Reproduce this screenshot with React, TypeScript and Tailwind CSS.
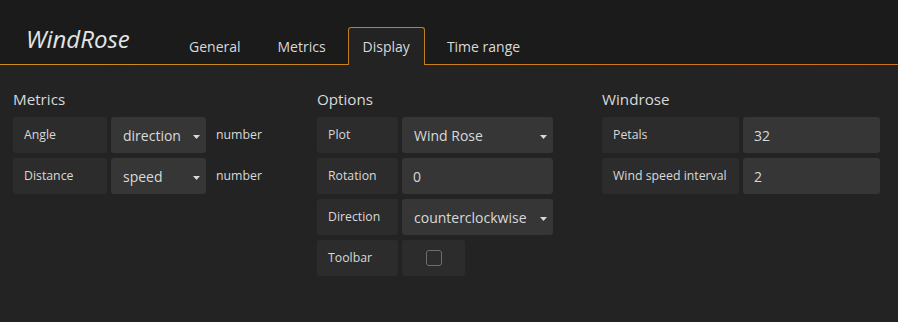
import React from "react";

const font = { fontFamily: '"Open Sans", "DejaVu Sans", sans-serif' };

function Caret() {
  return (
    <svg width="7" height="4" viewBox="0 0 7 4" className="mt-[3px]">
      <polygon points="0,0 7,0 3.5,4" fill="#d8d9da" />
    </svg>
  );
}

function Label({ w, children }: { w: string; children: React.ReactNode }) {
  return (
    <div className={`${w} h-full bg-[#2c2c2c] rounded-[3px] flex items-center pl-[11px] text-[12.3px] text-[#d8d9da] mr-[4px] whitespace-nowrap`}>
      {children}
    </div>
  );
}

function Select({ w, value }: { w: string; value: string }) {
  return (
    <div className={`${w} h-full bg-[#363636] rounded-[3px] flex items-center justify-between pl-[12px] pr-[6px] text-[14px] text-[#d8d9da]`}>
      <span>{value}</span>
      <Caret />
    </div>
  );
}

function Input({ w, value }: { w: string; value: string }) {
  return (
    <div className={`${w} h-full bg-[#363636] rounded-[3px] flex items-center pl-[11px] text-[14px] text-[#d8d9da]`}>
      {value}
    </div>
  );
}

function Row({ children }: { children: React.ReactNode }) {
  return <div className="flex items-center h-[36px] mb-[5px]">{children}</div>;
}

function Heading({ children }: { children: React.ReactNode }) {
  return (
    <div className="h-[20px] leading-[20px] text-[15.2px] text-[#d8d9da] mb-[8px]">{children}</div>
  );
}

export default function App() {
  const tabs = ["General", "Metrics", "Display", "Time range"];
  return (
    <div className="min-h-screen w-[898px] h-[322px] bg-[#232323] overflow-hidden" style={font}>
      <div className="bg-[#1b1b1b]">
        <div className="flex h-[64px] items-end">
          <div className="w-[174px] pl-[26px] self-start mt-[23px] leading-[32px] text-[24px] italic text-[#e4e4e4]">
            WindRose
          </div>
          <div className="flex gap-[7px]">
            {tabs.map((t) => {
              const active = t === "Display";
              return (
                <div
                  key={t}
                  className={
                    active
                      ? "relative z-10 h-[38px] -mb-[1px] px-[14px] flex items-center border border-b-0 border-[#c27d24] rounded-t-[3px] bg-[#232323] text-[14px] text-[#d8d9da]"
                      : "relative h-[38px] -mb-[1px] px-[14px] flex items-center border border-b-0 border-transparent text-[14px] text-[#d8d9da]"
                  }
                >
                  {t}
                </div>
              );
            })}
          </div>
        </div>
        <div className="h-px bg-linear-to-r from-[#c8901b] to-[#cf6f1e]" />
      </div>

      <div className="flex pl-[13px] pt-[24px]">
        <div className="w-[304px]">
          <Heading>Metrics</Heading>
          <Row>
            <Label w="w-[94px]">Angle</Label>
            <Select w="w-[95px]" value="direction" />
            <span className="ml-[10px] text-[12.3px] text-[#d8d9da]">number</span>
          </Row>
          <Row>
            <Label w="w-[94px]">Distance</Label>
            <Select w="w-[95px]" value="speed" />
            <span className="ml-[10px] text-[12.3px] text-[#d8d9da]">number</span>
          </Row>
        </div>

        <div className="w-[285px]">
          <Heading>Options</Heading>
          <Row>
            <Label w="w-[81px]">Plot</Label>
            <Select w="w-[151px]" value="Wind Rose" />
          </Row>
          <Row>
            <Label w="w-[81px]">Rotation</Label>
            <Input w="w-[151px]" value="0" />
          </Row>
          <Row>
            <Label w="w-[81px]">Direction</Label>
            <Select w="w-[151px]" value="counterclockwise" />
          </Row>
          <Row>
            <Label w="w-[81px]">Toolbar</Label>
            <div className="w-[63px] h-full bg-[#2c2c2c] rounded-[3px] flex items-center justify-center">
              <div className="w-[16px] h-[16px] rounded-[3px] border-[1.5px] border-[#6e6e6e]" />
            </div>
          </Row>
        </div>

        <div className="w-[290px]">
          <Heading>Windrose</Heading>
          <Row>
            <Label w="w-[137px]">Petals</Label>
            <Input w="w-[137px]" value="32" />
          </Row>
          <Row>
            <Label w="w-[137px]">Wind speed interval</Label>
            <Input w="w-[137px]" value="2" />
          </Row>
        </div>
      </div>
    </div>
  );
}
